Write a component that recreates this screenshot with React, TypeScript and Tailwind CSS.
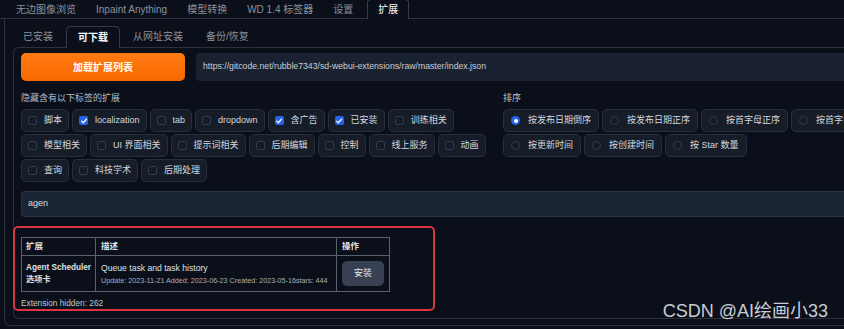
import React from "react";

// Dark SD-WebUI "扩展 / 可下载" panel, scaled-down screenshot look.

const TOP_TABS = ["无边图像浏览", "Inpaint Anything", "模型转换", "WD 1.4 标签器", "设置"];
const SUB_TABS = ["已安装", "可下载", "从网址安装", "备份/恢复"];

const TAG_ROWS: { label: string; checked?: boolean }[][] = [
  [
    { label: "脚本" },
    { label: "localization", checked: true },
    { label: "tab" },
    { label: "dropdown" },
    { label: "含广告", checked: true },
    { label: "已安装", checked: true },
    { label: "训练相关" },
  ],
  [
    { label: "模型相关" },
    { label: "UI 界面相关" },
    { label: "提示词相关" },
    { label: "后期编辑" },
    { label: "控制" },
    { label: "线上服务" },
    { label: "动画" },
  ],
  [{ label: "查询" }, { label: "科技学术" }, { label: "后期处理" }],
];

const SORT_ROWS: { label: string; checked?: boolean }[][] = [
  [
    { label: "按发布日期倒序", checked: true },
    { label: "按发布日期正序" },
    { label: "按首字母正序" },
    { label: "按首字母倒序" },
  ],
  [{ label: "按更新时间" }, { label: "按创建时间" }, { label: "按 Star 数量" }],
];

function Check({ checked }: { checked?: boolean }) {
  if (checked) {
    return (
      <span className="flex h-[9px] w-[9px] shrink-0 items-center justify-center rounded-[2px] bg-[#2563eb]">
        <svg viewBox="0 0 10 10" className="h-[8px] w-[8px]">
          <path d="M2 5.2 L4.1 7.2 L8 2.8" fill="none" stroke="white" strokeWidth="1.5" strokeLinecap="round" strokeLinejoin="round" />
        </svg>
      </span>
    );
  }
  return <span className="h-[9px] w-[9px] shrink-0 rounded-[2px] border border-[#323c4c] bg-[#151c28]" />;
}

function Radio({ checked }: { checked?: boolean }) {
  if (checked) {
    return (
      <span className="flex h-[9px] w-[9px] shrink-0 items-center justify-center rounded-full bg-[#2563eb]">
        <span className="h-[4px] w-[4px] rounded-full bg-white" />
      </span>
    );
  }
  return <span className="h-[9px] w-[9px] shrink-0 rounded-full border border-[#323c4c] bg-[#151c28]" />;
}

function Chip({ children, label, wide }: { children: React.ReactNode; label: string; wide?: boolean }) {
  return (
    <div
      className={
        wide
          ? "flex h-[23px] shrink-0 items-center gap-[8px] rounded-[5px] border border-[#262f3d] bg-[#161d29] pl-[7px] pr-[7px] text-[9px] text-[#d4d8de]"
          : "flex h-[23px] shrink-0 items-center gap-[7px] rounded-[5px] border border-[#262f3d] bg-[#161d29] pl-[6px] pr-[6px] text-[9px] text-[#d4d8de]"
      }
    >
      {children}
      <span className="whitespace-nowrap">{label}</span>
    </div>
  );
}

export default function App() {
  return (
    <div className="relative h-[329px] w-[844px] overflow-hidden bg-[#0b0f19] font-['Liberation_Sans','Noto_Sans_CJK_SC',sans-serif] text-[#d1d5db]">
      {/* top tabs */}
      <div className="flex h-[19px] items-end border-b border-[#2b313d] pl-[6px]">
        {TOP_TABS.map((t) => (
          <div key={t} className="flex h-full items-center whitespace-nowrap px-[10px] text-[10px] text-[#8a929f]">
            {t}
          </div>
        ))}
        <div className="relative -mb-px ml-[4px] flex h-[20px] items-center rounded-t-[4px] border border-b-0 border-[#363d4a] bg-[#0b0f19] px-[10px] text-[10px] text-white">
          扩展
        </div>
      </div>

      {/* outer panel */}
      <div className="ml-[4px] h-[307px] rounded-bl-[6px] border-b border-l border-[#2b313d]">
        <div className="ml-[8px]">
          {/* sub tabs */}
          <div className="flex h-[28px] items-end gap-[3px]">
            {SUB_TABS.map((t) =>
              t === "可下载" ? (
                <div
                  key={t}
                  className="relative z-10 -mb-px flex h-[22px] items-center rounded-t-[5px] border border-b-0 border-[#363d4a] bg-[#0b0f19] px-[11px] text-[10px] font-bold text-white"
                >
                  {t}
                </div>
              ) : (
                <div key={t} className="flex h-[22px] items-center whitespace-nowrap px-[10px] text-[10px] text-[#8a929f]">
                  {t}
                </div>
              ),
            )}
          </div>

          {/* sub panel */}
          <div className="h-[272px] rounded-l-[6px] border-b border-l border-t border-[#2b313d] pl-[7px] pt-[5px]">
            <div className="flex gap-[11px]">
              <button className="flex h-[28px] w-[164px] items-center justify-center rounded-[5px] bg-gradient-to-b from-[#ff7b12] to-[#f86800] text-[10px] font-bold text-white">
                加载扩展列表
              </button>
              <div className="flex h-[28px] flex-1 items-center rounded-l-[4px] bg-[#1a2130] pl-[7px] text-[8.7px] text-[#c9ced6]">
                https://gitcode.net/rubble7343/sd-webui-extensions/raw/master/index.json
              </div>
            </div>

            <div className="mt-[11px] flex">
              <div className="w-[482px] shrink-0 overflow-hidden">
                <div className="mb-[5px] h-[12px] text-[9px] leading-[12px] text-[#b9bec7]">隐藏含有以下标签的扩展</div>
                <div className="flex flex-col gap-[2px]">
                  {TAG_ROWS.map((row, i) => (
                    <div key={i} className="flex gap-[3px]">
                      {row.map((c) => (
                        <Chip key={c.label} label={c.label}>
                          <Check checked={c.checked} />
                        </Chip>
                      ))}
                    </div>
                  ))}
                </div>
              </div>
              <div className="min-w-0 flex-1 overflow-hidden">
                <div className="mb-[5px] h-[12px] text-[9px] leading-[12px] text-[#b9bec7]">排序</div>
                <div className="flex flex-col gap-[2px]">
                  {SORT_ROWS.map((row, i) => (
                    <div key={i} className="flex gap-[3px]">
                      {row.map((c) => (
                        <Chip key={c.label} label={c.label} wide>
                          <Radio checked={c.checked} />
                        </Chip>
                      ))}
                    </div>
                  ))}
                </div>
              </div>
            </div>

            {/* search */}
            <div className="mt-[9px] flex h-[26px] items-center rounded-l-[4px] border border-r-0 border-[#283242] bg-[#1b2433] pl-[6px] text-[9px] text-[#d7dbe1]">
              agen
            </div>

            {/* result, outlined in red */}
            <div className="-ml-[8px] mt-[9px] h-[85px] w-[422px] rounded-[5px] border-2 border-[#d9343f] pl-[6px] pt-[9px]">
              <table className="table-fixed border-collapse text-left text-[#dfe2e7]">
                <thead>
                  <tr className="h-[18px]">
                    <th className="w-[73px] border border-[#5a626f] px-[4px] text-[8.5px] font-bold">扩展</th>
                    <th className="w-[241px] border border-[#5a626f] px-[5px] text-[8.5px] font-bold">描述</th>
                    <th className="w-[53px] border border-[#5a626f] px-[5px] text-[8.5px] font-bold">操作</th>
                  </tr>
                </thead>
                <tbody>
                  <tr className="h-[36px]">
                    <td className="whitespace-nowrap border border-[#5a626f] px-[4px] align-middle text-[8.2px] font-bold leading-[12px]">
                      Agent Scheduler
                      <br />
                      选项卡
                    </td>
                    <td className="border border-[#5a626f] px-[5px] align-middle">
                      <div className="text-[8.6px] leading-[12px]">Queue task and task history</div>
                      <div className="mt-[2px] whitespace-nowrap text-[7.2px] leading-[10px] text-[#a9afb9]">
                        Update: 2023-11-21 Added: 2023-06-23 Created: 2023-05-16stars: 444
                      </div>
                    </td>
                    <td className="border border-[#5a626f] px-[5px] align-middle">
                      <button className="flex h-[25px] w-[42px] items-center justify-center rounded-[5px] bg-[#374151] text-[9px] text-[#e5e7eb]">
                        安装
                      </button>
                    </td>
                  </tr>
                </tbody>
              </table>
              <div className="mt-[5px] text-[8.3px] text-[#c3c8d0]">Extension hidden: 262</div>
            </div>
          </div>
        </div>
      </div>

      {/* watermark */}
      <div className="absolute bottom-[9px] right-[16px] text-[18px] leading-none text-[#c9cdd3]">CSDN @AI绘画小33</div>
    </div>
  );
}
